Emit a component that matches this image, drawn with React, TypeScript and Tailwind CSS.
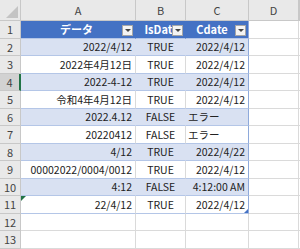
import React from 'react';

type Row = { a: string; b: string; c: string; cLeft?: boolean; err?: boolean };

const rows: Row[] = [
  { a: '2022/4/12', b: 'TRUE', c: '2022/4/12' },
  { a: '2022年4月12日', b: 'TRUE', c: '2022/4/12' },
  { a: '2022-4-12', b: 'TRUE', c: '2022/4/12' },
  { a: '令和4年4月12日', b: 'TRUE', c: '2022/4/12' },
  { a: '2022.4.12', b: 'FALSE', c: 'エラー', cLeft: true },
  { a: '20220412', b: 'FALSE', c: 'エラー', cLeft: true },
  { a: '4/12', b: 'TRUE', c: '2022/4/22' },
  { a: '00002022/0004/0012', b: 'TRUE', c: '2022/4/12' },
  { a: '4:12', b: 'FALSE', c: '4:12:00 AM' },
  { a: '22/4/12', b: 'TRUE', c: '2022/4/12', err: true },
];

const font = { fontFamily: '"Noto Sans CJK JP", "Noto Sans", sans-serif' };

function FilterBtn() {
  return (
    <div className="absolute right-[2px] bottom-[2px] w-[11px] h-[11px] bg-[#f4f4f4] border border-[#a6a6a6] flex items-center justify-center">
      <div className="w-0 h-0 border-l-[3px] border-r-[3px] border-t-[3px] border-l-transparent border-r-transparent border-t-[#444]" />
    </div>
  );
}

export default function App() {
  const heights = ['h-[18px]', 'h-[17px]'];
  const allRows = Array.from({ length: 13 }, (_, i) => i + 1);

  return (
    <div className="w-[300px] h-[249px] overflow-hidden bg-white text-[10.5px] text-[#222]" style={font}>
      {/* column headers */}
      <div className="flex h-[21px]">
        <div className="w-[21px] shrink-0 bg-[#e9e9e9] border-r border-b border-[#c8c8c8] relative">
          <svg className="absolute right-[2px] bottom-[2px]" width="12" height="12" viewBox="0 0 12 12">
            <polygon points="12,0 12,12 0,12" fill="#c4c4c4" />
          </svg>
        </div>
        {[
          ['A', 'w-[115px]'],
          ['B', 'w-[50px]'],
          ['C', 'w-[63px]'],
          ['D', 'w-[50px]'],
          ['', 'flex-1'],
        ].map(([l, w]) => (
          <div key={l || 'e'} className={`${w} shrink-0 bg-[#e9e9e9] border-r border-b border-[#c8c8c8] flex items-center justify-center text-[11px] text-[#444]`}>
            {l}
          </div>
        ))}
      </div>

      {allRows.map((n, i) => {
        const h = heights[i % 2];
        const inTable = n <= 11;
        const header = n === 1;
        const band = inTable && !header && n % 2 === 0;
        const data = n >= 2 && n <= 11 ? rows[n - 2] : null;
        const bg = header ? 'bg-[#4472c4]' : band ? 'bg-[#d9e1f2]' : 'bg-white';
        const hb = inTable ? 'border-b-[#b4c6e7]' : 'border-b-[#dadada]';
        const vb = band || header ? 'border-r-transparent' : 'border-r-[#dadada]';
        return (
          <div key={n} className={`flex ${h}`}>
            <div className={`w-[21px] shrink-0 border-r border-b flex items-center justify-center text-[11px] text-[#444] ${n === 4 ? 'bg-[#d2d2d2] border-r-[#217346] border-r-2 border-b-[#c8c8c8]' : 'bg-[#e9e9e9] border-[#c8c8c8]'}`}>
              {n}
            </div>
            <div className={`w-[115px] shrink-0 border-r border-b ${bg} ${hb} ${vb} relative flex items-center ${header ? 'justify-center' : 'justify-end'} pr-[3px] whitespace-nowrap`}>
              {header && (
                <>
                  <span className="text-white font-bold text-[11px]">データ</span>
                  <FilterBtn />
                </>
              )}
              {data && data.a}
              {data?.err && (
                <div className="absolute left-0 top-0 w-0 h-0 border-t-[5px] border-r-[5px] border-t-[#217346] border-r-transparent" />
              )}
            </div>
            <div className={`w-[50px] shrink-0 border-r border-b ${bg} ${hb} ${vb} relative flex items-center justify-center whitespace-nowrap overflow-hidden`}>
              {header && (
                <>
                  <span className="text-white font-bold text-[11px] pl-[2px]">IsDate</span>
                  <FilterBtn />
                </>
              )}
              {data && data.b}
            </div>
            <div className={`w-[63px] shrink-0 border-r border-b ${bg} ${hb} ${inTable ? 'border-r-[#8ea9db]' : 'border-r-[#dadada]'} relative flex items-center whitespace-nowrap ${header ? 'justify-center pr-[10px]' : data?.cLeft ? 'justify-start pl-[2px]' : 'justify-end pr-[3px]'}`}>
              {header && (
                <>
                  <span className="text-white font-bold text-[11px]">Cdate</span>
                  <FilterBtn />
                </>
              )}
              {data && data.c}
              {n === 11 && (
                <div className="absolute right-0 bottom-0 w-0 h-0 border-b-[4px] border-l-[4px] border-b-[#4472c4] border-l-transparent" />
              )}
            </div>
            <div className="w-[50px] shrink-0 border-r border-b border-[#dadada] bg-white" />
            <div className="flex-1 border-b border-[#dadada] bg-white" />
          </div>
        );
      })}
    </div>
  );
}
